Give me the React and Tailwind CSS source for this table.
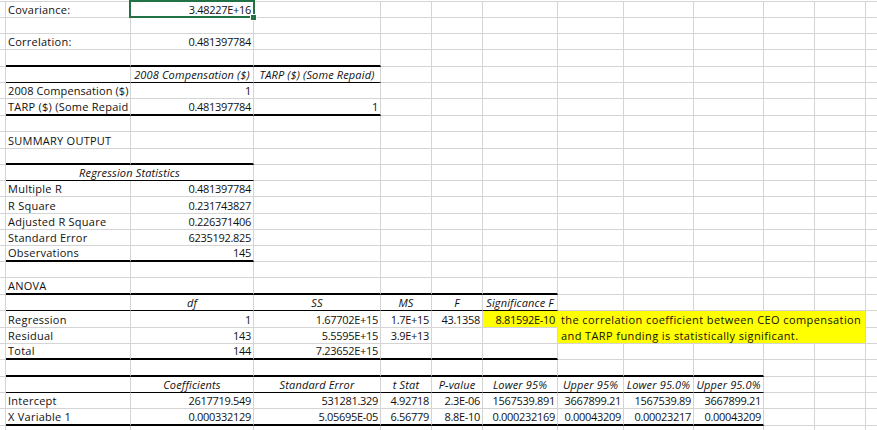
import React from "react";

const W = ["w-[125px]", "w-[123px]", "w-[127px]", "w-[51px]", "w-[51px]", "w-[75px]", "w-[66px]", "w-[70px]", "w-[70px]", "w-[51px]", "w-[51px]"];

const ROWS = [
  { h: "h-[16px]", c: { 0: { t: "Covariance:" }, 1: { t: "3.48227E+16", k: "n", sel: true } } },
  { h: "h-[16px]", c: {} },
  { h: "h-[16px]", c: { 0: { t: "Correlation:" }, 1: { t: "0.481397784", k: "n" } } },
  { h: "h-[17px]", c: {}, b: ["thick", 3] },
  { h: "h-[16px]", c: { 1: { t: "2008 Compensation ($)", k: "h" }, 2: { t: "TARP ($) (Some Repaid)", k: "h" } }, b: ["thin", 3] },
  { h: "h-[16px]", c: { 0: { t: "2008 Compensation ($)", tight: true }, 1: { t: "1", k: "n" } } },
  { h: "h-[17px]", c: { 0: { t: "TARP ($) (Some Repaid" }, 1: { t: "0.481397784", k: "n" }, 2: { t: "1", k: "n" } }, b: ["thick", 3] },
  { h: "h-[16px]", c: {} },
  { h: "h-[17px]", c: { 0: { t: "SUMMARY OUTPUT" } } },
  { h: "h-[16px]", c: {}, b: ["thick", 2] },
  { h: "h-[16px]", c: { 0: { t: "Regression Statistics", k: "h", w: "w-[248px]", span: 2 } }, b: ["thin", 2] },
  { h: "h-[16px]", c: { 0: { t: "Multiple R" }, 1: { t: "0.481397784", k: "n" } } },
  { h: "h-[17px]", c: { 0: { t: "R Square" }, 1: { t: "0.231743827", k: "n" } } },
  { h: "h-[16px]", c: { 0: { t: "Adjusted R Square" }, 1: { t: "0.226371406", k: "n" } } },
  { h: "h-[16px]", c: { 0: { t: "Standard Error" }, 1: { t: "6235192.825", k: "n" } } },
  { h: "h-[16px]", c: { 0: { t: "Observations" }, 1: { t: "145", k: "n" } }, b: ["thick", 2] },
  { h: "h-[16px]", c: {} },
  { h: "h-[17px]", c: { 0: { t: "ANOVA" } }, b: ["thick", 6] },
  { h: "h-[16px]", c: { 1: { t: "df", k: "h" }, 2: { t: "SS", k: "h" }, 3: { t: "MS", k: "h" }, 4: { t: "F", k: "h" }, 5: { t: "Significance F", k: "h" } }, b: ["thin", 6] },
  {
    h: "h-[17px]",
    c: {
      0: { t: "Regression" }, 1: { t: "1", k: "n" }, 2: { t: "1.67702E+15", k: "n" }, 3: { t: "1.7E+15", k: "n" }, 4: { t: "43.1358", k: "n" },
      5: { t: "8.81592E-10", k: "n", y: true, yr: true },
      6: { t: "the correlation coefficient between CEO compensation", w: "w-[308px]", span: 5, y: true, yb: true, wide: true },
    },
  },
  {
    h: "h-[16px]",
    c: {
      0: { t: "Residual" }, 1: { t: "143", k: "n" }, 2: { t: "5.5595E+15", k: "n" }, 3: { t: "3.9E+13", k: "n" },
      6: { t: "and TARP funding is statistically significant.", w: "w-[308px]", span: 5, y: true, wide: true },
    },
  },
  { h: "h-[16px]", c: { 0: { t: "Total" }, 1: { t: "144", k: "n" }, 2: { t: "7.23652E+15", k: "n" } }, b: ["thick", 6] },
  { h: "h-[17px]", c: {}, b: ["thick", 9] },
  {
    h: "h-[16px]",
    c: {
      1: { t: "Coefficients", k: "h" }, 2: { t: "Standard Error", k: "h" }, 3: { t: "t Stat", k: "h" }, 4: { t: "P-value", k: "h" },
      5: { t: "Lower 95%", k: "h" }, 6: { t: "Upper 95%", k: "h" }, 7: { t: "Lower 95.0%", k: "h" }, 8: { t: "Upper 95.0%", k: "h" },
    },
    b: ["thin", 9],
  },
  {
    h: "h-[16px]",
    c: {
      0: { t: "Intercept" }, 1: { t: "2617719.549", k: "n" }, 2: { t: "531281.329", k: "n" }, 3: { t: "4.92718", k: "n" }, 4: { t: "2.3E-06", k: "n" },
      5: { t: "1567539.891", k: "n" }, 6: { t: "3667899.21", k: "n" }, 7: { t: "1567539.89", k: "n" }, 8: { t: "3667899.21", k: "n" },
    },
  },
  {
    h: "h-[17px]",
    c: {
      0: { t: "X Variable 1" }, 1: { t: "0.000332129", k: "n" }, 2: { t: "5.05695E-05", k: "n" }, 3: { t: "6.56779", k: "n" }, 4: { t: "8.8E-10", k: "n" },
      5: { t: "0.000232169", k: "n" }, 6: { t: "0.00043209", k: "n" }, 7: { t: "0.00023217", k: "n" }, 8: { t: "0.00043209", k: "n" },
    },
    b: ["thick", 9],
  },
  { h: "h-[5px]", c: {} },
];

function Cell({ w, spec, bottom }) {
  const k = spec?.k;
  let bb = "border-b border-b-[#d4d4d4]";
  if (bottom === "thick") bb = "border-b-2 border-b-black";
  else if (bottom === "thin") bb = "border-b border-b-black";
  else if (spec?.yb) bb = "border-b border-b-[#ffff00]";
  const br = spec?.yr ? "border-r border-r-[#ffff00]" : "border-r border-r-[#d4d4d4]";
  const bg = spec?.y ? "bg-[#ffff00]" : "bg-white";
  let al = "justify-start pl-[2px] tracking-[0.25px]";
  if (spec?.tight) al = "justify-start pl-[2px] tracking-[0.1px]";
  if (spec?.wide) al = "justify-start pl-[3px] tracking-[0.4px]";
  if (k === "n") al = "justify-end pr-[2px] tracking-[-0.3px]";
  if (k === "h") al = "justify-center italic tracking-[0.15px]";
  if (spec?.sel) {
    return (
      <div className={`relative ${w} shrink-0 h-full flex items-end ${bb} ${br} ${bg} ${al}`}>
        <span className="leading-[15px]">{spec.t}</span>
        <div className="absolute -left-[2px] -top-[2px] w-[126px] h-[18px] border-2 border-[#217346] pointer-events-none" />
        <div className="absolute left-[119px] top-[12px] w-[7px] h-[7px] bg-[#217346] border border-white" />
      </div>
    );
  }
  return (
    <div className={`${w} shrink-0 h-full flex items-end overflow-hidden whitespace-nowrap ${bb} ${br} ${bg} ${al}`}>
      {spec?.t ? <span className="leading-[15px]">{spec.t}</span> : null}
    </div>
  );
}

function Row({ row }) {
  const cells = [];
  let i = 0;
  const [bk, upto] = row.b || [null, 0];
  while (i < 11) {
    const spec = row.c[i];
    const span = spec?.span || 1;
    const w = spec?.w || W[i];
    cells.push(<Cell key={i} w={w} spec={spec} bottom={i < upto ? bk : null} />);
    i += span;
  }
  return (
    <div className={`flex ${row.h}`}>
      <div className="w-[6px] shrink-0 h-full border-r border-b border-[#d4d4d4]" />
      {cells}
      <div className="flex-1 h-full border-b border-[#d4d4d4]" />
    </div>
  );
}

export default function App() {
  return (
    <div
      className="w-[877px] h-[430px] overflow-hidden bg-white text-[11px] text-[#111]"
      style={{ fontFamily: '"Open Sans", sans-serif' }}
    >
      <div className="h-[2px] border-b border-[#d4d4d4]" />
      {ROWS.map((r, idx) => (
        <Row key={idx} row={r} />
      ))}
    </div>
  );
}
